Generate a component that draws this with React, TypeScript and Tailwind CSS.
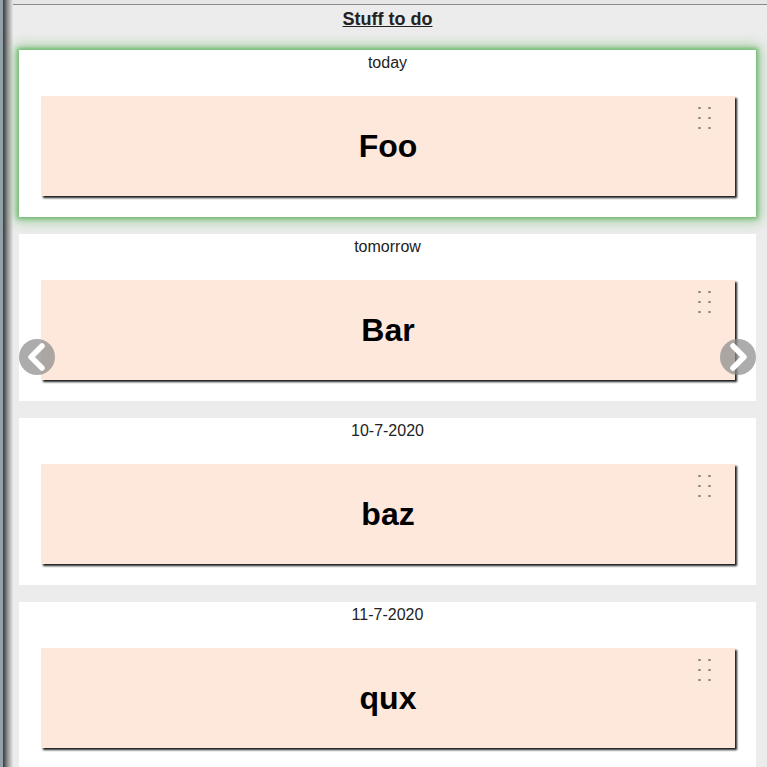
import React from 'react'

const items = [
  { when: 'today', title: 'Foo', active: true },
  { when: 'tomorrow', title: 'Bar' },
  { when: '10-7-2020', title: 'baz' },
  { when: '11-7-2020', title: 'qux' },
]

const DragHandle = () => (
  <div className="absolute top-[11px] right-[24px] grid grid-cols-2 gap-x-[7px] gap-y-[8px]">
    {Array.from({ length: 6 }).map((_, i) => (
      <span key={i} className="block w-[3px] h-[2px] rounded-full bg-[#8a8a8a]" />
    ))}
  </div>
)

const Arrow = ({ dir }: { dir: 'left' | 'right' }) => (
  <button
    className={
      'absolute top-[339px] w-[36px] h-[36px] rounded-full bg-[rgba(140,140,140,0.72)] ' +
      (dir === 'left' ? 'left-[19px]' : 'right-[11px]')
    }
  >
    <svg width="36" height="36" viewBox="0 0 36 36" fill="none" stroke="#fff" strokeWidth="5.5" strokeLinecap="round" strokeLinejoin="round">
      {dir === 'left' ? <path d="M23 7 L12 18 L23 29" /> : <path d="M13 7 L24 18 L13 29" />}
    </svg>
  </button>
)

const Card = ({ when, title, active }: { when: string; title: string; active?: boolean }) => (
  <div
    className={
      'shrink-0 bg-white pt-[4px] pb-[21px] px-[22px] ' +
      (active ? 'shadow-[0_0_4px_2px_rgba(110,185,110,0.95),0_0_12px_4px_rgba(110,185,110,0.6)]' : '')
    }
  >
    <div className="text-base leading-[18px] text-center text-[#222]">{when}</div>
    <div className="relative mt-[24px] mr-[-1px] h-[100px] bg-[#fee8dc] shadow-[2px_2px_2px_rgba(0,0,0,0.9)] flex items-center justify-center">
      <span className="text-[32px] font-bold text-black">{title}</span>
      <DragHandle />
    </div>
  </div>
)

export default function App() {
  return (
    <div
      className="relative h-[767px] overflow-hidden bg-[#ececec] flex"
      style={{ fontFamily: '"Liberation Sans", Arial, sans-serif' }}
    >
      <div className="w-[3px] bg-[#93a2aa] shrink-0" />
      <div className="w-[10px] shrink-0 bg-gradient-to-r from-[#3a3a3a] via-[#9a9a9a] to-[#e8e8e8]" />
      <div className="flex-1 flex flex-col">
        <div className="h-[4px] shrink-0 bg-[#e6e6e6]" />
        <div className="h-[1px] shrink-0 bg-[#8a8a8a]" />
        <div className="shrink-0 pl-[6px] pr-[11px] flex flex-col gap-[17px]">
          <h1 className="shrink-0 text-center text-[18px] leading-[28px] font-bold underline text-[#222]">Stuff to do</h1>
          {items.map((it) => (
            <Card key={it.title} {...it} />
          ))}
        </div>
      </div>
      <Arrow dir="left" />
      <Arrow dir="right" />
    </div>
  )
}
